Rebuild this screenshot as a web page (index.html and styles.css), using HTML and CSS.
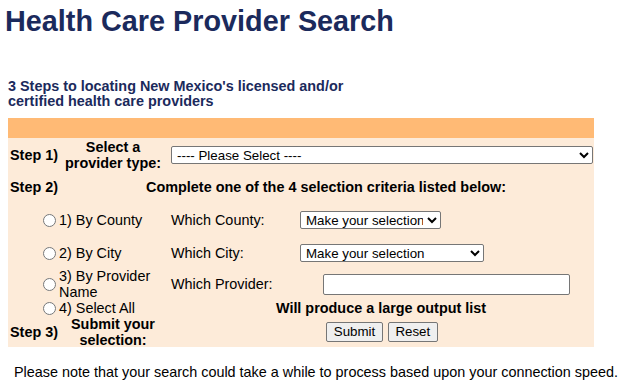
FILE: index.html
```html
<!DOCTYPE html>
<html lang="en">

<head>
    <meta charset="UTF-8">
    <meta name="viewport" content="width=device-width, initial-scale=1.0">
    <title>Health Care Provider Search</title>
    <link rel="stylesheet" href="styles.css">
</head>

<body>

    <h1 class="title">Health Care Provider Search</h1>

    <p class="intro">3 Steps to locating New Mexico's licensed and/or certified health care providers</p>

    <!-- Search Form -->
    <form class="search" onsubmit="return false;">
        <div class="bar"></div>

        <!-- Step 1 -->
        <div class="step">Step 1)</div>
        <div class="label">Select a provider type:</div>
        <div class="field wide">
            <select class="type-select">
                <option>---- Please Select ----</option>
            </select>
        </div>

        <!-- Step 2 -->
        <div class="step">Step 2)</div>
        <div class="note full">Complete one of the 4 selection criteria listed below:</div>

        <div class="pick"><input type="radio" name="criteria" value="county"></div>
        <div class="option">1) By County</div>
        <div class="ask">Which County:</div>
        <div class="field">
            <select class="county-select">
                <option>Make your selection</option>
            </select>
        </div>

        <div class="pick"><input type="radio" name="criteria" value="city"></div>
        <div class="option">2) By City</div>
        <div class="ask">Which City:</div>
        <div class="field">
            <select class="city-select">
                <option>Make your selection</option>
            </select>
        </div>

        <div class="pick"><input type="radio" name="criteria" value="provider"></div>
        <div class="option">3) By Provider Name</div>
        <div class="ask">Which Provider:</div>
        <div class="field centered">
            <input type="text" class="provider-input">
        </div>

        <div class="pick"><input type="radio" name="criteria" value="all"></div>
        <div class="option">4) Select All</div>
        <div class="note wide">Will produce a large output list</div>

        <!-- Step 3 -->
        <div class="step">Step 3)</div>
        <div class="label">Submit your selection:</div>
        <div class="buttons wide">
            <button type="submit">Submit</button>
            <button type="reset">Reset</button>
        </div>
    </form>

    <p class="footnote">Please note that your search could take a while to process based upon your connection speed.</p>

</body>
</html>
```

FILE: styles.css
```css
body {
    margin: 0;
    padding: 0 8px;
    font-family: "Liberation Sans", Arial, sans-serif;
    font-size: 14.4px;
    color: #000;
    background: #fff;
}

.title {
    margin: 5px 0 0 -3px;
    font-size: 28.8px;
    font-weight: bold;
    line-height: 33px;
    color: #1b2a5c;
}

.intro {
    width: 350px;
    margin: 41px 0 9px 0;
    font-size: 14.4px;
    font-weight: bold;
    line-height: 15px;
    color: #1b2a5c;
}

/* Search grid */
.search {
    width: 586px;
    display: grid;
    grid-template-columns: 30px 20px 110px 130px 1fr;
    grid-template-rows: 20px 34px 30px 36px 30px 32px 16px 31px;
    background-color: #fdebd9;
}

.bar {
    grid-column: 1 / 6;
    background-color: #ffba75;
}

.step,
.label,
.note,
.pick,
.option,
.ask,
.field,
.buttons {
    display: flex;
    align-items: center;
    line-height: 16px;
}

.step {
    grid-column: 1 / 3;
    padding-left: 2px;
    font-weight: bold;
}

.label {
    justify-content: center;
    text-align: center;
    font-weight: bold;
}

.note {
    justify-content: center;
    font-weight: bold;
}

.full {
    grid-column: 3 / 6;
}

.wide {
    grid-column: 4 / 6;
}

.pick {
    grid-column: 2;
}

.pick input {
    width: 13px;
    height: 13px;
    margin: 0 0 0 5px;
}

.option {
    padding-left: 1px;
}

.ask {
    padding-left: 3px;
}

.field {
    padding-left: 2px;
}

.field.wide {
    padding-left: 3px;
}

.field.centered {
    justify-content: center;
    padding-left: 0;
}

select,
input[type="text"],
button {
    font-family: "Liberation Sans", Arial, sans-serif;
    font-size: 13.33px;
    color: #000;
    box-sizing: border-box;
}

select {
    height: 18px;
    padding: 0 1px;
    border: 1px solid #767676;
    border-radius: 2px;
    background-color: #fff;
}

.type-select {
    width: 422px;
}

.county-select {
    width: 141px;
}

.city-select {
    width: 184px;
}

.provider-input {
    width: 247px;
    height: 21px;
    padding: 1px 2px;
    border: 1px solid #767676;
    border-radius: 2px;
    background: #fff;
}

.buttons {
    justify-content: center;
    gap: 5px;
    padding-left: 2px;
}

.buttons button {
    height: 20px;
    padding: 0 6.6px;
    border: 1px solid #767676;
    border-radius: 2px;
    background-color: #efefef;
}

.footnote {
    margin: 17px 0 0 0;
    text-align: center;
    line-height: 16px;
}
```
